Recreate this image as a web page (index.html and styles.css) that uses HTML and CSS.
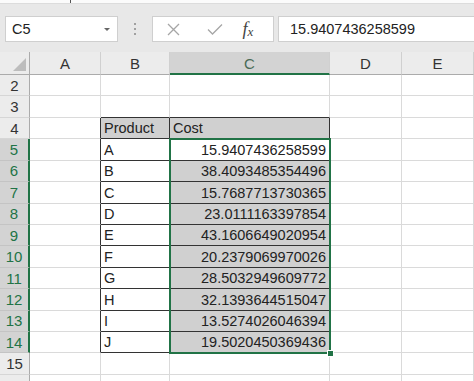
FILE: index.html
```html
<!DOCTYPE html>
<html lang="en">
<head>
    <meta charset="UTF-8">
    <title>Cost sheet</title>
    <link rel="stylesheet" href="styles.css">
</head>
<body>
    <div class="ribbon-edge"><span class="tick"></span></div>

    <div class="formula-bar">
        <div class="name-box">
            <span>C5</span>
            <span class="drop"></span>
        </div>
        <div class="grip"><i></i><i></i><i></i></div>
        <div class="fx-buttons">
            <svg width="13" height="13" viewBox="0 0 13 13"><path d="M1 1 L12 12 M12 1 L1 12" stroke="#a6a6a6" stroke-width="1.3" fill="none"/></svg>
            <svg width="16" height="13" viewBox="0 0 16 13"><path d="M1 6.5 L5.5 11 L15 1.5" stroke="#a6a6a6" stroke-width="1.3" fill="none"/></svg>
            <span class="fx">f<sub>x</sub></span>
        </div>
        <div class="formula-input">15.9407436258599</div>
    </div>

    <div class="sheet">
        <div class="corner"><span class="tri"></span></div>
        <div class="ch">A</div>
        <div class="ch">B</div>
        <div class="ch sel">C</div>
        <div class="ch">D</div>
        <div class="ch">E</div>

        <div class="rh">2</div><div class="c"></div><div class="c"></div><div class="c"></div><div class="c"></div><div class="c"></div>
        <div class="rh">3</div><div class="c"></div><div class="c bt"></div><div class="c bt"></div><div class="c"></div><div class="c"></div>
        <div class="rh">4</div><div class="c bl"></div><div class="c bx fill">Product</div><div class="c bx fill">Cost</div><div class="c"></div><div class="c"></div>
        <div class="rh sel">5</div><div class="c bl"></div><div class="c bx">A</div><div class="c bx num">15.9407436258599</div><div class="c"></div><div class="c"></div>
        <div class="rh sel">6</div><div class="c bl"></div><div class="c bx">B</div><div class="c bx num fill">38.4093485354496</div><div class="c"></div><div class="c"></div>
        <div class="rh sel">7</div><div class="c bl"></div><div class="c bx">C</div><div class="c bx num fill">15.7687713730365</div><div class="c"></div><div class="c"></div>
        <div class="rh sel">8</div><div class="c bl"></div><div class="c bx">D</div><div class="c bx num fill">23.0111163397854</div><div class="c"></div><div class="c"></div>
        <div class="rh sel">9</div><div class="c bl"></div><div class="c bx">E</div><div class="c bx num fill">43.1606649020954</div><div class="c"></div><div class="c"></div>
        <div class="rh sel">10</div><div class="c bl"></div><div class="c bx">F</div><div class="c bx num fill">20.2379069970026</div><div class="c"></div><div class="c"></div>
        <div class="rh sel">11</div><div class="c bl"></div><div class="c bx">G</div><div class="c bx num fill">28.5032949609772</div><div class="c"></div><div class="c"></div>
        <div class="rh sel">12</div><div class="c bl"></div><div class="c bx">H</div><div class="c bx num fill">32.1393644515047</div><div class="c"></div><div class="c"></div>
        <div class="rh sel">13</div><div class="c bl"></div><div class="c bx">I</div><div class="c bx num fill">13.5274026046394</div><div class="c"></div><div class="c"></div>
        <div class="rh sel">14</div><div class="c bl"></div><div class="c bx">J</div><div class="c bx num fill">19.5020450369436</div><div class="c"></div><div class="c"></div>
        <div class="rh">15</div><div class="c"></div><div class="c"></div><div class="c"></div><div class="c"></div><div class="c"></div>
        <div class="rh"></div><div class="c"></div><div class="c"></div><div class="c"></div><div class="c"></div><div class="c"></div>

        <!-- selected range C5:C14 -->
        <div class="selection"><span class="handle"></span></div>
    </div>
</body>
</html>
```

FILE: styles.css
```css
body {
    margin: 0;
    width: 474px;
    height: 381px;
    overflow: hidden;
    font-family: "Liberation Sans", Arial, sans-serif;
    font-size: 14.5px;
    color: #222;
    background: #e8e8e8;
}
.ribbon-edge {
    height: 4px;
    background: #fbfbfb;
    border-bottom: 1px solid #dcdcdc;
    box-sizing: border-box;
    position: relative;
}
.tick {
    position: absolute;
    left: 70px;
    top: 0;
    width: 1px;
    height: 3px;
    background: #555;
}
.formula-bar {
    height: 48px;
    display: flex;
    align-items: flex-start;
    padding: 12px 0 0 5px;
    box-sizing: border-box;
    background: #e8e8e8;
}
.name-box {
    width: 113px;
    height: 26px;
    box-sizing: border-box;
    background: white;
    border: 1px solid #cfcfcf;
    display: flex;
    align-items: center;
    justify-content: space-between;
    padding: 0 7px 0 6px;
}
.drop {
    width: 0;
    height: 0;
    border-left: 3px solid transparent;
    border-right: 3px solid transparent;
    border-top: 3px solid #666;
}
.grip {
    width: 34px;
    height: 26px;
    display: flex;
    flex-direction: column;
    align-items: center;
    justify-content: center;
    gap: 3px;
}
.grip i {
    width: 2px;
    height: 2px;
    background: #a0a0a0;
}
.fx-buttons {
    width: 122px;
    height: 26px;
    box-sizing: border-box;
    background: white;
    border: 1px solid #cfcfcf;
    display: grid;
    grid-template-columns: 40px 44px 22px;
    align-items: center;
    justify-items: center;
}
.fx {
    font-family: "Liberation Serif", "Times New Roman", serif;
    font-style: italic;
    font-size: 18px;
    color: #444;
    line-height: 1;
}
.fx sub {
    font-size: 13px;
    vertical-align: -1px;
}
.formula-input {
    flex: 1;
    margin-left: 4px;
    height: 26px;
    box-sizing: border-box;
    background: white;
    border: 1px solid #cfcfcf;
    border-right: none;
    padding-left: 11px;
    display: flex;
    align-items: center;
    white-space: nowrap;
}
.sheet {
    position: relative;
    display: grid;
    grid-template-columns: 30px 71px 69px 160px 72px 72px;
    grid-template-rows: 23px repeat(15, 21.43px);
    background: white;
}
.corner {
    background: #ececec;
    border-right: 1px solid #ababab;
    border-bottom: 1px solid #ababab;
    box-sizing: border-box;
    display: flex;
    align-items: flex-end;
    justify-content: flex-end;
    padding: 0 3px 3px 0;
}
.tri {
    width: 13px;
    height: 13px;
    background: #bdbdbd;
    clip-path: polygon(100% 0, 100% 100%, 0 100%);
}
.ch {
    background: #ececec;
    border-right: 1px solid #d0d0d0;
    border-bottom: 1px solid #ababab;
    box-sizing: border-box;
    display: flex;
    align-items: center;
    justify-content: center;
    color: #333;
    font-size: 15px;
    padding-top: 1px;
}
.ch.sel {
    background: #d3d3d3;
    color: #4a6b56;
    border-bottom: 2px solid #217346;
}
.rh {
    background: #ececec;
    border-right: 1px solid #ababab;
    border-bottom: 1px solid #d6d6d6;
    box-sizing: border-box;
    display: flex;
    align-items: center;
    justify-content: center;
    color: #333;
    font-size: 15px;
}
.rh.sel {
    background: #d3d3d3;
    color: #217346;
    border-right: 2px solid #217346;
    border-bottom-color: #c4c4c4;
}
.c {
    border-right: 1px solid #dadada;
    border-bottom: 1px solid #dadada;
    box-sizing: border-box;
    display: flex;
    align-items: flex-end;
    padding: 0 3px 1px 3px;
    white-space: nowrap;
    line-height: 17px;
}
.c.num {
    justify-content: flex-end;
}
.c.fill {
    background: #d0d0d0;
}
.c.bx {
    border-right-color: #333;
    border-bottom-color: #333;
}
.c.bl {
    border-right-color: #333;
}
.c.bt {
    border-bottom-color: #333;
}
.selection {
    position: absolute;
    left: 169px;
    top: 86px;
    width: 162px;
    height: 216px;
    box-sizing: border-box;
    border: 2px solid #217346;
    pointer-events: none;
}
.handle {
    position: absolute;
    right: -5px;
    bottom: -5px;
    width: 5px;
    height: 5px;
    background: #217346;
    border: 1px solid white;
}
```
